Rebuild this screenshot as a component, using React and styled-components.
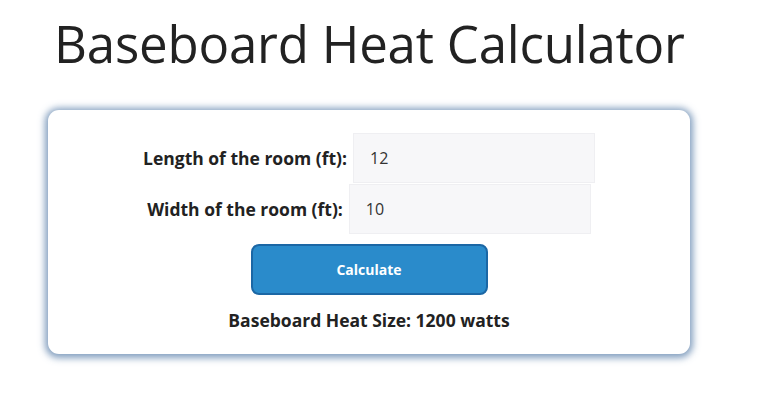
import React, { useState } from "react";
import styled, { createGlobalStyle } from "styled-components";

const GlobalStyle = createGlobalStyle`
  body {
    margin: 0;
    background: #ffffff;
    font-family: "Open Sans", "Noto Sans", sans-serif;
    color: #222;
  }
`;

const Page = styled.main`
  padding: 10px 0 20px 48px;
`;

const Title = styled.h1`
  margin: 0 0 34px 6px;
  font-size: 51px;
  font-weight: 400;
  line-height: 66px;
  letter-spacing: -0.2px;
  color: #222;
`;

const Card = styled.section`
  width: 642px;
  height: 244px;
  box-sizing: border-box;
  padding: 23px 0 0;
  background: #fff;
  border-radius: 11px;
  box-shadow: 0 1px 7px 3px rgba(100, 135, 175, 0.8);
  display: flex;
  flex-direction: column;
  align-items: center;
`;

const Row = styled.div`
  display: flex;
  align-items: center;
  gap: 6px;
  margin-bottom: 1px;
`;

const Label = styled.label`
  font-size: 17.5px;
  font-weight: 700;
  color: #222;
`;

const Input = styled.input`
  width: 242px;
  height: 50px;
  box-sizing: border-box;
  padding: 0 16px;
  border: 1px solid #efeff2;
  background: #f7f7f9;
  font-family: "Open Sans", "Noto Sans", sans-serif;
  font-size: 16px;
  color: #333;
  outline: none;
`;

const Button = styled.button`
  margin-top: 9px;
  width: 237px;
  height: 51px;
  border: 2px solid #1b67a5;
  border-radius: 8px;
  background: #2a8bcb;
  color: #fff;
  font-family: "Open Sans", "Noto Sans", sans-serif;
  font-size: 14px;
  font-weight: 700;
  cursor: pointer;
`;

const Result = styled.p`
  margin: 13px 0 0;
  font-size: 17.5px;
  line-height: 24px;
  font-weight: 700;
  color: #222;
`;

export default function App() {
  const [length, setLength] = useState("12");
  const [width, setWidth] = useState("10");
  const [watts, setWatts] = useState(1200);

  return (
    <>
      <GlobalStyle />
      <Page>
        <Title>Baseboard Heat Calculator</Title>
        <Card>
          <Row>
            <Label htmlFor="len">Length of the room (ft):</Label>
            <Input id="len" value={length} onChange={(e) => setLength(e.target.value)} />
          </Row>
          <Row>
            <Label htmlFor="wid">Width of the room (ft):</Label>
            <Input id="wid" value={width} onChange={(e) => setWidth(e.target.value)} />
          </Row>
          <Button onClick={() => setWatts(Number(length) * Number(width) * 10)}>Calculate</Button>
          <Result>Baseboard Heat Size: {watts} watts</Result>
        </Card>
      </Page>
    </>
  );
}
